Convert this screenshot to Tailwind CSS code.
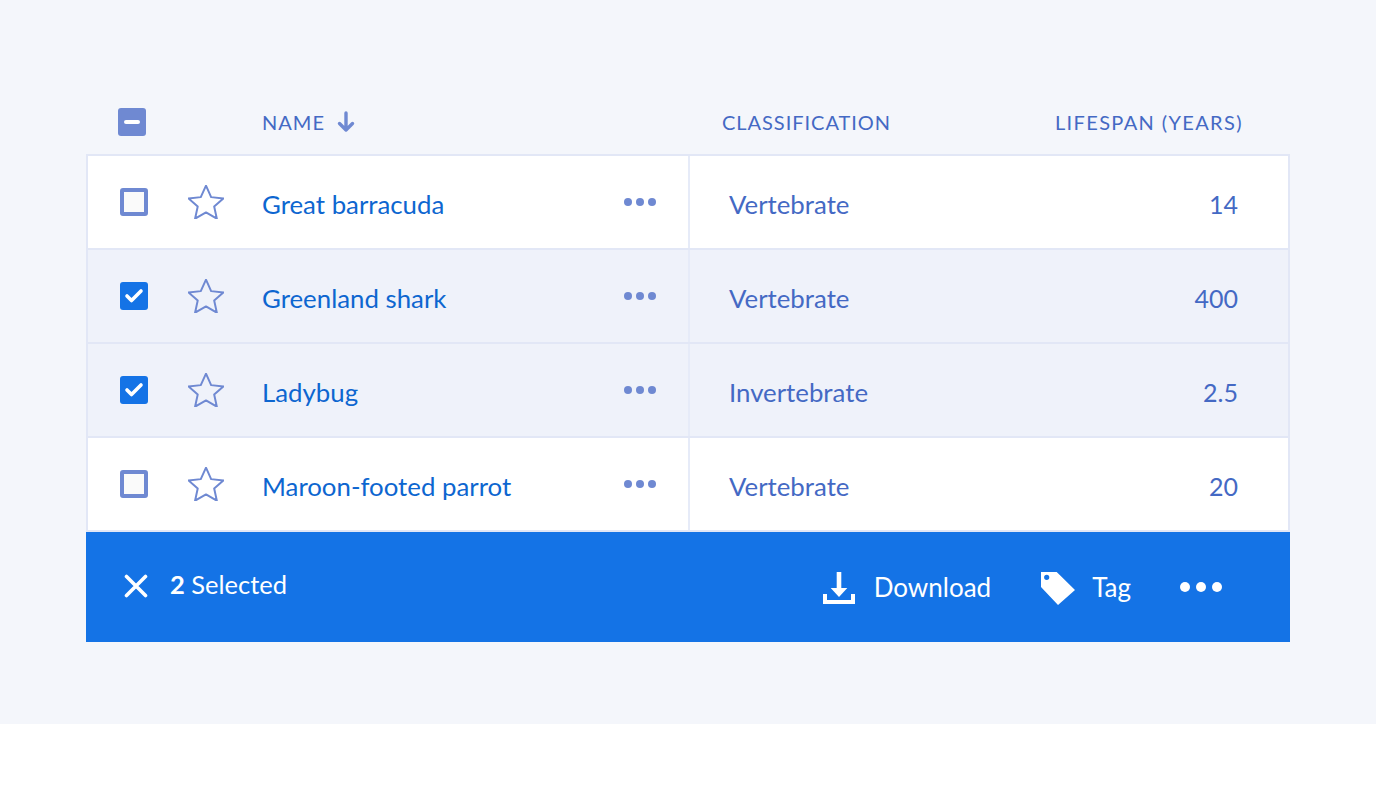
<!DOCTYPE html>
<html lang="en">
<head>
  <meta charset="UTF-8">
  <title>Table</title>
  <script src="https://cdn.jsdelivr.net/npm/@tailwindcss/browser@4"></script>
</head>
<body class="bg-white font-['Lato',sans-serif]">
  <div class="h-[724px] bg-[#f4f6fb] pt-[91px] px-[86px]">
    <!-- header -->
    <div class="flex h-[63px] items-center text-[20px] text-[#4469c4] pb-[1px]">
      <div class="w-[176px] pl-[32px]">
        <div class="flex size-[28px] items-center justify-center rounded-[3px] bg-[#6f89d2]">
          <div class="h-[4px] w-[16px] rounded-full bg-white"></div>
        </div>
      </div>
      <div class="flex w-[460px] items-center gap-[12px] tracking-[1px]">
        <span>NAME</span>
        <svg width="18" height="22" viewBox="0 0 18 22"><path d="M9 2v17M2.500 12.500 9 19l6.500-6.500" fill="none" stroke="#6f89d2" stroke-width="3.400" stroke-linecap="round" stroke-linejoin="round"/></svg>
      </div>
      <div class="w-[333px] tracking-[0.96px]">CLASSIFICATION</div>
      <div class="whitespace-nowrap tracking-[1.35px]">LIFESPAN (YEARS)</div>
    </div>

    <!-- rows -->
    <div class="border-x-2 border-[#e2e7f6] text-[25.8px]">
      <div class="flex h-[94px] items-center border-t-2 border-[#e2e7f6] bg-white">
        <div class="flex w-[174px] shrink-0 items-center pl-[32px]">
          <div class="size-[28px] rounded-[3px] border-[4px] border-[#6f89d2] bg-[#fafafa]"></div>
          <svg class="ml-[40px]" width="36" height="34" viewBox="1 1.500 36 34.500"><path d="M19 2.200l5.200 11.600 12.400 1.300-9.300 8.300 2.700 12.300L19 29.300 7.900 35.700l2.700-12.300-9.300-8.300 12.400-1.300z" fill="none" stroke="#6f89d2" stroke-width="2" stroke-linejoin="round"/></svg>
        </div>
        <div class="flex h-full w-[428px] shrink-0 items-center justify-between border-r-2 border-[#e6ebf8] pr-[32px]">
          <span class="pt-[4px] text-[#0d66d0]">Great barracuda</span>
          <div class="flex gap-[4px]"><i class="size-[8px] rounded-full bg-[#6f89d2]"></i><i class="size-[8px] rounded-full bg-[#6f89d2]"></i><i class="size-[8px] rounded-full bg-[#6f89d2]"></i></div>
        </div>
        <div class="flex flex-1 items-baseline justify-between pl-[39px] pr-[50px] pt-[4px] text-[#4469c4]"><span>Vertebrate</span><span class="text-[25px]">14</span></div>
      </div>

      <div class="flex h-[94px] items-center border-t-2 border-[#e2e7f6] bg-[#eff2fa]">
        <div class="flex w-[174px] shrink-0 items-center pl-[32px]">
          <div class="flex size-[28px] items-center justify-center rounded-[3px] bg-[#1473e6]">
            <svg width="20" height="16" viewBox="0 0 20 16"><path d="M3 8l4.500 4.500L17 3" fill="none" stroke="#fff" stroke-width="3.600" stroke-linecap="round" stroke-linejoin="round"/></svg>
          </div>
          <svg class="ml-[40px]" width="36" height="34" viewBox="1 1.500 36 34.500"><path d="M19 2.200l5.200 11.600 12.400 1.300-9.300 8.300 2.700 12.300L19 29.300 7.900 35.700l2.700-12.300-9.300-8.300 12.400-1.300z" fill="none" stroke="#6f89d2" stroke-width="2" stroke-linejoin="round"/></svg>
        </div>
        <div class="flex h-full w-[428px] shrink-0 items-center justify-between border-r-2 border-[#e6ebf8] pr-[32px]">
          <span class="pt-[4px] text-[#0d66d0]">Greenland shark</span>
          <div class="flex gap-[4px]"><i class="size-[8px] rounded-full bg-[#6f89d2]"></i><i class="size-[8px] rounded-full bg-[#6f89d2]"></i><i class="size-[8px] rounded-full bg-[#6f89d2]"></i></div>
        </div>
        <div class="flex flex-1 items-baseline justify-between pl-[39px] pr-[50px] pt-[4px] text-[#4469c4]"><span>Vertebrate</span><span class="text-[25px]">400</span></div>
      </div>

      <div class="flex h-[94px] items-center border-t-2 border-[#e2e7f6] bg-[#eff2fa]">
        <div class="flex w-[174px] shrink-0 items-center pl-[32px]">
          <div class="flex size-[28px] items-center justify-center rounded-[3px] bg-[#1473e6]">
            <svg width="20" height="16" viewBox="0 0 20 16"><path d="M3 8l4.500 4.500L17 3" fill="none" stroke="#fff" stroke-width="3.600" stroke-linecap="round" stroke-linejoin="round"/></svg>
          </div>
          <svg class="ml-[40px]" width="36" height="34" viewBox="1 1.500 36 34.500"><path d="M19 2.200l5.200 11.600 12.400 1.300-9.300 8.300 2.700 12.300L19 29.300 7.900 35.700l2.700-12.300-9.300-8.300 12.400-1.300z" fill="none" stroke="#6f89d2" stroke-width="2" stroke-linejoin="round"/></svg>
        </div>
        <div class="flex h-full w-[428px] shrink-0 items-center justify-between border-r-2 border-[#e6ebf8] pr-[32px]">
          <span class="pt-[4px] text-[#0d66d0]">Ladybug</span>
          <div class="flex gap-[4px]"><i class="size-[8px] rounded-full bg-[#6f89d2]"></i><i class="size-[8px] rounded-full bg-[#6f89d2]"></i><i class="size-[8px] rounded-full bg-[#6f89d2]"></i></div>
        </div>
        <div class="flex flex-1 items-baseline justify-between pl-[39px] pr-[50px] pt-[4px] text-[#4469c4]"><span>Invertebrate</span><span class="text-[25px]">2.5</span></div>
      </div>

      <div class="flex h-[96px] items-center border-y-2 border-[#e2e7f6] bg-white">
        <div class="flex w-[174px] shrink-0 items-center pl-[32px]">
          <div class="size-[28px] rounded-[3px] border-[4px] border-[#6f89d2] bg-[#fafafa]"></div>
          <svg class="ml-[40px]" width="36" height="34" viewBox="1 1.500 36 34.500"><path d="M19 2.200l5.200 11.600 12.400 1.300-9.300 8.300 2.700 12.300L19 29.300 7.900 35.700l2.700-12.300-9.300-8.300 12.400-1.300z" fill="none" stroke="#6f89d2" stroke-width="2" stroke-linejoin="round"/></svg>
        </div>
        <div class="flex h-full w-[428px] shrink-0 items-center justify-between border-r-2 border-[#e6ebf8] pr-[32px]">
          <span class="pt-[4px] text-[#0d66d0]">Maroon-footed parrot</span>
          <div class="flex gap-[4px]"><i class="size-[8px] rounded-full bg-[#6f89d2]"></i><i class="size-[8px] rounded-full bg-[#6f89d2]"></i><i class="size-[8px] rounded-full bg-[#6f89d2]"></i></div>
        </div>
        <div class="flex flex-1 items-baseline justify-between pl-[39px] pr-[50px] pt-[4px] text-[#4469c4]"><span>Vertebrate</span><span class="text-[25px]">20</span></div>
      </div>
    </div>

    <!-- action bar -->
    <div class="flex h-[110px] items-center bg-[#1473e6] pl-[38px] pr-[68px] text-[26px] text-white">
      <svg class="-mt-[3px]" width="24" height="24" viewBox="0 0 24 24"><path d="M2.500 2.500l19 19M21.500 2.500l-19 19" stroke="#fff" stroke-width="3.600" stroke-linecap="round"/></svg>
      <span class="ml-[22px] -mt-[6px] text-[25.5px]"><b class="font-bold">2</b> Selected</span>
      <div class="ml-auto flex items-center">
        <svg class="mt-[1px]" width="32" height="32" viewBox="0 0 32 32"><path d="M13.700 0h4.600v16h6L16 25l-8.300-9h6zM0 22h4v6h24v-6h4v10H0z" fill="#fff"/></svg>
        <span class="ml-[19px]">Download</span>
        <svg class="ml-[50px] mt-[3px]" width="34" height="34" viewBox="0 0 34 34"><path d="M0 0h15.700L34 18 17 33 0 15zM5.700 2.700a2.600 2.600 0 1 0 0 5.200 2.600 2.600 0 0 0 0-5.200z" fill="#fff" fill-rule="evenodd"/></svg>
        <span class="ml-[17px]">Tag</span>
        <div class="ml-[49px] flex gap-[6px]"><i class="size-[10px] rounded-full bg-white"></i><i class="size-[10px] rounded-full bg-white"></i><i class="size-[10px] rounded-full bg-white"></i></div>
      </div>
    </div>
  </div>
</body>
</html>
